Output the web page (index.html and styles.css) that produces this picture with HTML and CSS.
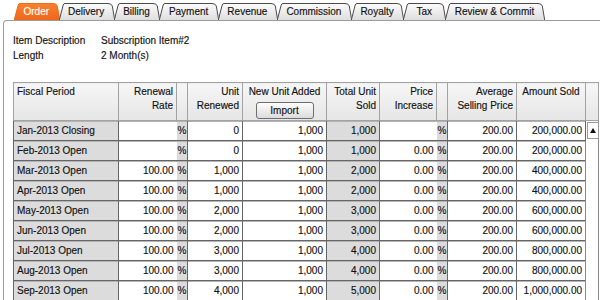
FILE: index.html
```html
<!DOCTYPE html>
<html>
<head>
<meta charset="utf-8">
<link rel="stylesheet" href="styles.css">
</head>
<body>
<svg class="defs" width="0" height="0">
  <defs>
    <linearGradient id="tabg" x1="0" y1="0" x2="0" y2="1">
      <stop offset="0" stop-color="#fbfbfb"/>
      <stop offset="1" stop-color="#dedede"/>
    </linearGradient>
    <linearGradient id="tabo" x1="0" y1="0" x2="0" y2="1">
      <stop offset="0" stop-color="#f7812f"/>
      <stop offset="1" stop-color="#f0661a"/>
    </linearGradient>
  </defs>
</svg>
<div class="tabs">
  <div class="tab active">
    <svg class="tl" width="6" height="17"><path class="f" d="M0 17 L4.2 2 Q4.7 0.5 6 0.5 V17 Z"/><path class="s" d="M0.3 17 L4.2 2 Q4.7 0.5 6 0.5"/></svg><span class="tm">Order</span><svg class="tr" width="7" height="17"><path class="f" d="M0 0.5 Q3.5 0.5 4.3 3 L7 17 H0 Z"/><path class="s" d="M0 0.5 Q3.5 0.5 4.3 3 L6.7 17"/></svg>
  </div>
  <div class="tab">
    <svg class="tl" width="6" height="17"><path class="f" d="M0 17 L4.2 2 Q4.7 0.5 6 0.5 V17 Z"/><path class="s" d="M0.3 17 L4.2 2 Q4.7 0.5 6 0.5"/></svg><span class="tm">Delivery</span><svg class="tr" width="7" height="17"><path class="f" d="M0 0.5 Q3.5 0.5 4.3 3 L7 17 H0 Z"/><path class="s" d="M0 0.5 Q3.5 0.5 4.3 3 L6.7 17"/></svg>
  </div>
  <div class="tab">
    <svg class="tl" width="6" height="17"><path class="f" d="M0 17 L4.2 2 Q4.7 0.5 6 0.5 V17 Z"/><path class="s" d="M0.3 17 L4.2 2 Q4.7 0.5 6 0.5"/></svg><span class="tm">Billing</span><svg class="tr" width="7" height="17"><path class="f" d="M0 0.5 Q3.5 0.5 4.3 3 L7 17 H0 Z"/><path class="s" d="M0 0.5 Q3.5 0.5 4.3 3 L6.7 17"/></svg>
  </div>
  <div class="tab">
    <svg class="tl" width="6" height="17"><path class="f" d="M0 17 L4.2 2 Q4.7 0.5 6 0.5 V17 Z"/><path class="s" d="M0.3 17 L4.2 2 Q4.7 0.5 6 0.5"/></svg><span class="tm">Payment</span><svg class="tr" width="7" height="17"><path class="f" d="M0 0.5 Q3.5 0.5 4.3 3 L7 17 H0 Z"/><path class="s" d="M0 0.5 Q3.5 0.5 4.3 3 L6.7 17"/></svg>
  </div>
  <div class="tab">
    <svg class="tl" width="6" height="17"><path class="f" d="M0 17 L4.2 2 Q4.7 0.5 6 0.5 V17 Z"/><path class="s" d="M0.3 17 L4.2 2 Q4.7 0.5 6 0.5"/></svg><span class="tm">Revenue</span><svg class="tr" width="7" height="17"><path class="f" d="M0 0.5 Q3.5 0.5 4.3 3 L7 17 H0 Z"/><path class="s" d="M0 0.5 Q3.5 0.5 4.3 3 L6.7 17"/></svg>
  </div>
  <div class="tab">
    <svg class="tl" width="6" height="17"><path class="f" d="M0 17 L4.2 2 Q4.7 0.5 6 0.5 V17 Z"/><path class="s" d="M0.3 17 L4.2 2 Q4.7 0.5 6 0.5"/></svg><span class="tm">Commission</span><svg class="tr" width="7" height="17"><path class="f" d="M0 0.5 Q3.5 0.5 4.3 3 L7 17 H0 Z"/><path class="s" d="M0 0.5 Q3.5 0.5 4.3 3 L6.7 17"/></svg>
  </div>
  <div class="tab">
    <svg class="tl" width="6" height="17"><path class="f" d="M0 17 L4.2 2 Q4.7 0.5 6 0.5 V17 Z"/><path class="s" d="M0.3 17 L4.2 2 Q4.7 0.5 6 0.5"/></svg><span class="tm">Royalty</span><svg class="tr" width="7" height="17"><path class="f" d="M0 0.5 Q3.5 0.5 4.3 3 L7 17 H0 Z"/><path class="s" d="M0 0.5 Q3.5 0.5 4.3 3 L6.7 17"/></svg>
  </div>
  <div class="tab">
    <svg class="tl" width="6" height="17"><path class="f" d="M0 17 L4.2 2 Q4.7 0.5 6 0.5 V17 Z"/><path class="s" d="M0.3 17 L4.2 2 Q4.7 0.5 6 0.5"/></svg><span class="tm">Tax</span><svg class="tr" width="7" height="17"><path class="f" d="M0 0.5 Q3.5 0.5 4.3 3 L7 17 H0 Z"/><path class="s" d="M0 0.5 Q3.5 0.5 4.3 3 L6.7 17"/></svg>
  </div>
  <div class="tab">
    <svg class="tl" width="6" height="17"><path class="f" d="M0 17 L4.2 2 Q4.7 0.5 6 0.5 V17 Z"/><path class="s" d="M0.3 17 L4.2 2 Q4.7 0.5 6 0.5"/></svg><span class="tm">Review &amp; Commit</span><svg class="tr" width="7" height="17"><path class="f" d="M0 0.5 Q3.5 0.5 4.3 3 L7 17 H0 Z"/><path class="s" d="M0 0.5 Q3.5 0.5 4.3 3 L6.7 17"/></svg>
  </div>
</div>
<div class="panel">
  <div class="info">
    <div class="info-row"><span class="lbl">Item Description</span><span>Subscription Item#2</span></div>
    <div class="info-row"><span class="lbl">Length</span><span>2 Month(s)</span></div>
  </div>
  <table class="grid">
    <colgroup>
      <col class="c-fp"><col class="c-rr"><col class="c-pc"><col class="c-ur"><col class="c-nu"><col class="c-ts"><col class="c-pi"><col class="c-pc"><col class="c-as"><col class="c-am"><col class="c-sb">
    </colgroup>
    <thead>
      <tr>
        <th class="left">Fiscal Period</th>
        <th>Renewal<br>Rate</th>
        <th></th>
        <th>Unit<br>Renewed</th>
        <th class="center">New Unit Added<br><button class="btn">Import</button></th>
        <th>Total Unit<br>Sold</th>
        <th>Price<br>Increase</th>
        <th></th>
        <th>Average<br>Selling Price</th>
        <th class="center">Amount Sold</th>
        <th></th>
      </tr>
    </thead>
    <tbody>
      <tr><td class="fp">Jan-2013 Closing</td><td class="in"></td><td class="pc">%</td><td class="in">0</td><td class="in">1,000</td><td class="ro">1,000</td><td class="in"></td><td class="pc">%</td><td class="in">200.00</td><td class="am">200,000.00</td><td class="sb" rowspan="9"><div class="up"><span class="arrow"></span></div></td></tr>
      <tr><td class="fp">Feb-2013 Open</td><td class="in"></td><td class="pc">%</td><td class="in">0</td><td class="in">1,000</td><td class="ro">1,000</td><td class="in">0.00</td><td class="pc">%</td><td class="in">200.00</td><td class="am">200,000.00</td></tr>
      <tr><td class="fp">Mar-2013 Open</td><td class="in">100.00</td><td class="pc">%</td><td class="in">1,000</td><td class="in">1,000</td><td class="ro">2,000</td><td class="in">0.00</td><td class="pc">%</td><td class="in">200.00</td><td class="am">400,000.00</td></tr>
      <tr><td class="fp">Apr-2013 Open</td><td class="in">100.00</td><td class="pc">%</td><td class="in">1,000</td><td class="in">1,000</td><td class="ro">2,000</td><td class="in">0.00</td><td class="pc">%</td><td class="in">200.00</td><td class="am">400,000.00</td></tr>
      <tr><td class="fp">May-2013 Open</td><td class="in">100.00</td><td class="pc">%</td><td class="in">2,000</td><td class="in">1,000</td><td class="ro">3,000</td><td class="in">0.00</td><td class="pc">%</td><td class="in">200.00</td><td class="am">600,000.00</td></tr>
      <tr><td class="fp">Jun-2013 Open</td><td class="in">100.00</td><td class="pc">%</td><td class="in">2,000</td><td class="in">1,000</td><td class="ro">3,000</td><td class="in">0.00</td><td class="pc">%</td><td class="in">200.00</td><td class="am">600,000.00</td></tr>
      <tr><td class="fp">Jul-2013 Open</td><td class="in">100.00</td><td class="pc">%</td><td class="in">3,000</td><td class="in">1,000</td><td class="ro">4,000</td><td class="in">0.00</td><td class="pc">%</td><td class="in">200.00</td><td class="am">800,000.00</td></tr>
      <tr><td class="fp">Aug-2013 Open</td><td class="in">100.00</td><td class="pc">%</td><td class="in">3,000</td><td class="in">1,000</td><td class="ro">4,000</td><td class="in">0.00</td><td class="pc">%</td><td class="in">200.00</td><td class="am">800,000.00</td></tr>
      <tr><td class="fp">Sep-2013 Open</td><td class="in">100.00</td><td class="pc">%</td><td class="in">4,000</td><td class="in">1,000</td><td class="ro">5,000</td><td class="in">0.00</td><td class="pc">%</td><td class="in">200.00</td><td class="am">1,000,000.00</td></tr>
    </tbody>
  </table>
</div>
</body>
</html>
```
FILE: styles.css
```css
html, body {
  margin: 0;
  padding: 0;
  background: #ffffff;
  overflow: hidden;
}
body {
  font-family: "Liberation Sans", Arial, sans-serif;
  font-size: 10px;
  color: #111111;
  -webkit-text-stroke: 0.15px #111111;
  width: 600px;
  height: 300px;
}
.defs {
  position: absolute;
  width: 0;
  height: 0;
}

/* Tabs */
.tabs {
  display: flex;
  padding: 3px 0 0 14px;
  height: 17px;
}
.tab {
  display: flex;
  height: 17px;
  margin-right: -1px;
}
.tab svg {
  display: block;
  flex: none;
}
.tab .f { fill: url(#tabg); }
.tab .s { fill: none; stroke: #4a4a4a; stroke-width: 1; }
.tab .tm {
  display: block;
  height: 16px;
  line-height: 16px;
  border-top: 1px solid #4a4a4a;
  background: linear-gradient(#fbfbfb, #dedede);
  padding: 0 3.5px;
  min-width: 23px;
  text-align: center;
  color: #111111;
  white-space: nowrap;
}
.tab.active .f { fill: url(#tabo); }
.tab.active .s { stroke: #ef6a1c; }
.tab.active .tm {
  background: linear-gradient(#f7812f, #f0661a);
  border-top-color: #ef6a1c;
  color: #ffffff;
  -webkit-text-stroke: 0.15px #ffffff;
}

/* Panel */
.panel {
  margin-left: 3px;
  border-top: 1px solid #9c9c9c;
  border-left: 1px solid #9c9c9c;
  border-top-left-radius: 4px;
  padding: 12px 0 0 9px;
  height: 300px;
}
.info-row {
  display: flex;
  line-height: 15px;
}
.info-row .lbl {
  width: 88px;
}

/* Grid */
.grid {
  margin-top: 19px;
  border-collapse: collapse;
  table-layout: fixed;
  width: 585px;
}
.c-fp { width: 105px; }
.c-rr { width: 58px; }
.c-pc { width: 11px; }
.c-ur { width: 55px; }
.c-nu { width: 84px; }
.c-ts { width: 53px; }
.c-pi { width: 57px; }
.c-as { width: 69px; }
.c-am { width: 69px; }
.c-sb { width: 13px; }

.grid th {
  background: linear-gradient(#f6f6f6, #e6e6e6);
  border: 1px solid #a2a2a2;
  font-weight: normal;
  text-align: right;
  vertical-align: top;
  padding: 2px 3px 0 3px;
  line-height: 14px;
  height: 35px;
  white-space: nowrap;
  color: #111111;
}
.grid th.left { text-align: left; }
.grid th.center { text-align: center; }

.btn {
  font-family: "Liberation Sans", Arial, sans-serif;
  font-size: 10px;
  color: #111111;
  -webkit-text-stroke: 0.15px #111111;
  width: 58px;
  height: 17px;
  margin-top: 3px;
  padding: 0;
  border: 1px solid #6e6e6e;
  border-radius: 3px;
  background: linear-gradient(#fdfdfd, #dcdcdc);
}

.grid td {
  height: 19px;
  padding: 0 3px;
  border: 1px solid #666666;
  border-top-color: #5a5a5a;
  text-align: right;
  white-space: nowrap;
  line-height: 19px;
  box-shadow: inset 0 1px 0 #b4b4b4;
  background: #ffffff;
}
.grid td.fp {
  text-align: left;
  background: #dcdcdc;
  padding-left: 3px;
}
.grid td.in { border-right: none; }
.grid td.pc {
  background: #dcdcdc;
  border-left: none;
  padding: 0 1px;
  text-align: left;
}
.grid td.ro { background: #dcdcdc; }
.grid td.am { background: #ffffff; }
.grid td.sb {
  vertical-align: top;
  padding: 0;
  box-shadow: none;
  border-color: #8a8a8a;
}
.up {
  width: 10px;
  height: 15px;
  margin: 1px 0 0 1px;
  border: 1px solid #9a9a9a;
  background: #ffffff;
  position: relative;
}
.arrow {
  position: absolute;
  left: 2px;
  top: 5px;
  width: 0;
  height: 0;
  border-left: 3px solid transparent;
  border-right: 3px solid transparent;
  border-bottom: 5px solid #111;
}
```
